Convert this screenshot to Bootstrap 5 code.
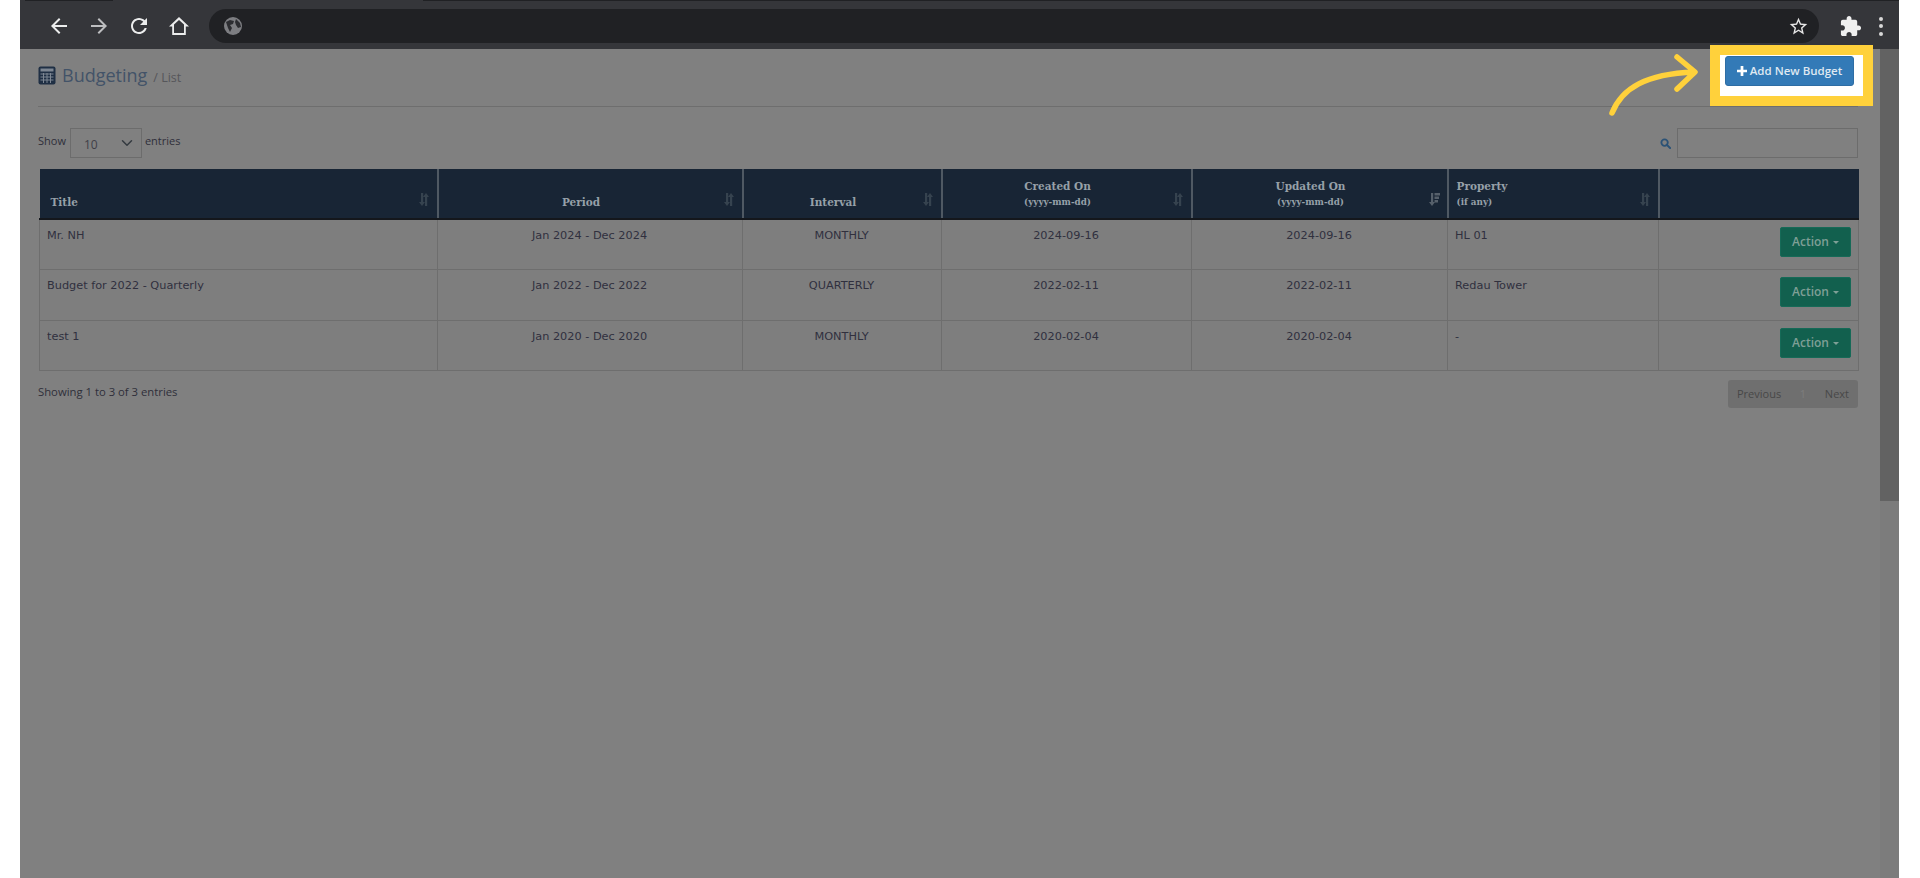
<!DOCTYPE html>
<html lang="en"><head><meta charset="utf-8"><title>Budgeting</title>
<link rel="stylesheet" href="https://cdn.jsdelivr.net/npm/bootstrap@5.3.0/dist/css/bootstrap.min.css">
<style>
html,body{height:100%;overflow:hidden}
body{background:#fff;font-family:"Open Sans","Noto Sans",sans-serif;font-size:11px;color:#30303e}
.frame{margin:0 20px 0 20px;height:878px;width:1879px;display:flex;flex-direction:column;position:relative;background:#808080}
.chrome-bar{height:49px;padding-top:3px;background:#35363a;display:flex;align-items:center;flex:none;position:relative}
.tabedge-a,.tabedge-b{position:absolute;top:0;height:1px;background:#202124}
.tabedge-a{left:5px;width:88px}.tabedge-b{left:403px;right:0}
.nav-ic{width:24px;height:24px;fill:#eceded;flex:none;display:block}
.nav-ic.dim{fill:#bdbec0}
.ic-slot{width:40px;display:flex;justify-content:center;flex:none}
.nav-group{padding-left:19px;display:flex}
.omni{margin-left:10px;width:1610px;height:34px;background:#202124;border-radius:17px;display:flex;align-items:center;justify-content:space-between;padding:0 10px 0 14px}
.globe{width:20px;height:20px;display:block}
.star-ic{width:21px;height:21px;fill:#e6e6e6;display:block}
.puzzle{width:23px;height:23px;fill:#f0f0f0;margin-left:20px;display:block}
.dots{display:flex;flex-direction:column;gap:3.5px;margin-left:17px}
.dots i{display:block;width:4px;height:4px;border-radius:50%;background:#d8d8d8}
.page-wrap{flex:1;display:flex;min-height:0}
.page-main{flex:1;padding:0 22px 0 18px;min-width:0}
.scroll-track{width:19px;background:#7c7c7c;flex:none}
.scroll-thumb{height:452px;background:#626262}
.head-row{height:43px;display:flex;align-items:flex-start;padding-top:14px;border-bottom:1px solid #6e6e6e;box-sizing:content-box}
.head-title{font-size:18px;line-height:24px;color:#435368;margin:0 0 0 6px;font-weight:400}
.head-sub{font-size:12.500px;color:#56565a;margin-left:6px}
.calc{width:18px;height:19px;display:block;margin-top:3px}
.tools-row{height:31px;margin-top:21px;display:flex;align-items:flex-start;justify-content:space-between}
.len-label{display:flex;align-items:flex-start;color:#2f2f3a;font-size:11px;line-height:26px}
.len-select{width:72px;height:30px;margin:0 3px 0 4px;background-color:transparent;background-position:right 6px center;border:1px solid #6c6c6c;border-radius:0;font-size:12px;color:#3f3f48;padding:4px 20px 0 13px;font-family:inherit;box-shadow:none}
.search-wrap{display:flex;align-items:center;gap:6px}
.search-ic{width:11px;height:11px;display:block}
.search-box{width:181px;height:30px;background:transparent;border:1px solid #6c6c6c;border-radius:0}
.grid-table{margin:10px 0 0 1px;width:1819px;table-layout:fixed;border-collapse:collapse;--bs-table-bg:transparent;color:#30303e;font-family:"DejaVu Sans",sans-serif;font-size:11.300px}
.grid-table th,.grid-table td{border:1px solid #6e6e6e;padding:0}
.grid-table thead th{background:#182535;color:#96a0a8;height:50px;font-family:"DejaVu Serif",serif;font-size:10.500px;font-weight:700;vertical-align:bottom;border:0;border-left:2px solid #4f5963;border-bottom:2px solid #14171c;position:relative;line-height:16px;padding:0 26px 8px 8px;text-align:center}
.grid-table thead th:first-child{border-left:0;text-align:left;padding-left:11px}
.th-left{text-align:left!important}
.th-note{display:block;font-size:8.800px;line-height:16px}
.sort-ic{position:absolute;right:7px;bottom:12px;width:12px;height:13px;fill:#36434f}
.sort-ic.on{fill:#56606b}
.grid-table tbody tr{height:50.500px}
.grid-table tbody td{vertical-align:top;padding:8px 8px 0 7px;line-height:16px;background:#7e7e7e}
.act-btn{display:inline-flex;align-items:center;gap:4px;height:30px;width:71px;justify-content:center;background:#12604e;border:1px solid #166a57;color:#7f9f96;font-family:"Open Sans",sans-serif;font-size:12px;font-weight:600;padding:0;border-radius:2px}
.act-btn:after{content:"";border-top:3px solid #7f9f96;border-left:3px solid transparent;border-right:3px solid transparent;margin-top:1px}
.act-cell{text-align:right;padding:7px 7px 0 0!important}
.foot-row{display:flex;justify-content:space-between;align-items:flex-start;margin-top:9px;font-size:11.300px;color:#2f2f3a}
.info-txt{margin-top:4px;line-height:16px}
.pager{display:flex;justify-content:space-between;align-items:center;width:130px;height:28px;background:#6f6f6f;border-radius:3px;padding:0 9px;font-size:11px;color:#484848}
.pager b{font-weight:400;color:#7d7d7d}
.mark-box{position:absolute;left:1690px;top:45px;width:163px;height:61px;border:10px solid #ffd13b;background:#fff}
.add-btn{position:absolute;left:5px;top:1px;width:129px;height:30px;background:#337ab7;border:1px solid #2e6da4;border-radius:3px;color:#dfe8f1;font-size:11.500px;font-weight:600;padding:0;display:flex;align-items:center;justify-content:center;gap:3px;white-space:nowrap}
.plus{width:10px;height:10px;fill:#fff;display:block}
.mark-arrow{position:absolute;left:1588px;top:48px;width:92px;height:72px;fill:none;stroke:#ffd13b;stroke-width:5.500;stroke-linecap:round;stroke-linejoin:round}
</style></head>
<body>
<div class="frame">
  <div class="chrome-bar">
    <span class="tabedge-a"></span><span class="tabedge-b"></span>
    <div class="nav-group">
      <span class="ic-slot"><svg class="nav-ic" viewBox="0 0 24 24"><path d="M20 11H7.830l5.590-5.590L12 4l-8 8 8 8 1.410-1.410L7.830 13H20v-2z"/></svg></span>
      <span class="ic-slot"><svg class="nav-ic dim" viewBox="0 0 24 24"><path d="M4 11h12.170l-5.590-5.590L12 4l8 8-8 8-1.410-1.410L16.170 13H4v-2z"/></svg></span>
      <span class="ic-slot"><svg class="nav-ic" viewBox="0 0 24 24"><path d="M17.650 6.350C16.200 4.900 14.210 4 12 4c-4.420 0-7.990 3.580-7.990 8s3.570 8 7.990 8c3.730 0 6.840-2.550 7.730-6h-2.080c-.82 2.330-3.040 4-5.650 4-3.310 0-6-2.690-6-6s2.690-6 6-6c1.660 0 3.140.69 4.220 1.780L13 11h7V4l-2.350 2.350z"/></svg></span>
      <span class="ic-slot"><svg class="nav-ic" viewBox="0 0 24 24"><path d="M12 3 2 12.400h3.200V21h13.600v-8.600H22L12 3zm0 2.900 5 4.600V19H7v-8.500l5-4.600z" fill-rule="evenodd"/></svg></span>
    </div>
    <div class="omni">
      <svg class="globe" viewBox="0 0 20 20"><circle cx="10" cy="10" r="9" fill="#7d7e82"/><path d="M3 6l4-2 4 1-1 3-3 1 2 3-2 4-2-4zM13 3l4 4 1 4-3 1-2-3-1-3z" fill="#2c2d31"/></svg>
      <svg class="star-ic" viewBox="0 0 24 24"><path d="M22 9.240l-7.190-.62L12 2 9.190 8.630 2 9.240l5.460 4.730L5.820 21 12 17.270 18.180 21l-1.630-7.030L22 9.240zM12 15.400l-3.760 2.270 1-4.280-3.320-2.880 4.380-.38L12 6.100l1.710 4.040 4.380.38-3.320 2.880 1 4.280L12 15.400z"/></svg>
    </div>
    <svg class="puzzle" viewBox="0 0 24 24"><path d="M20.500 11H19V7c0-1.100-.9-2-2-2h-4V3.500C13 2.120 11.880 1 10.500 1S8 2.120 8 3.500V5H4c-1.100 0-1.990.9-1.990 2v3.800H3.500c1.490 0 2.700 1.210 2.700 2.700s-1.210 2.700-2.700 2.700H2V20c0 1.100.9 2 2 2h3.800v-1.500c0-1.490 1.210-2.700 2.700-2.700 1.490 0 2.700 1.210 2.700 2.700V22H17c1.100 0 2-.9 2-2v-4h1.500c1.380 0 2.500-1.120 2.500-2.500S21.880 11 20.500 11z"/></svg>
    <span class="dots"><i></i><i></i><i></i></span>
  </div>
  <div class="page-wrap">
    <div class="page-main">
      <div class="head-row">
        <svg class="calc" viewBox="0 0 18 19"><rect x=".5" y=".5" width="17" height="18" rx="2" fill="#1f2f44"/><rect x="2.500" y="2.500" width="13" height="3" fill="#7d8692"/><path d="M2.500 8h13M2.500 11h13M2.500 14h13M5.500 7v10M9 7v10M12.500 7v10" stroke="#7d8692" stroke-width="1"/></svg>
        <h1 class="head-title">Budgeting<span class="head-sub">/ List</span></h1>
      </div>
      <div class="tools-row">
        <label class="len-label">Show<select class="form-select len-select"><option>10</option></select>entries</label>
        <div class="search-wrap">
          <svg class="search-ic" viewBox="0 0 12 12"><circle cx="5" cy="5" r="3.500" fill="none" stroke="#2b5276" stroke-width="2"/><path d="M7.500 7.500 11 11" stroke="#2b5276" stroke-width="2.200" stroke-linecap="round"/></svg>
          <input class="form-control search-box" type="search" aria-label="Search">
        </div>
      </div>
      <table class="table grid-table">
        <colgroup><col style="width:398px"><col style="width:305px"><col style="width:199px"><col style="width:250px"><col style="width:256px"><col style="width:211px"><col style="width:200px"></colgroup>
        <thead><tr>
          <th>Title<svg class="sort-ic" viewBox="0 0 12 13"><path d="M3 0h2.200v9H7l-3 4-3-4h2zM8 0l3 4H9.200v9H7V4H5z"/></svg></th>
          <th>Period<svg class="sort-ic" viewBox="0 0 12 13"><path d="M3 0h2.200v9H7l-3 4-3-4h2zM8 0l3 4H9.200v9H7V4H5z"/></svg></th>
          <th>Interval<svg class="sort-ic" viewBox="0 0 12 13"><path d="M3 0h2.200v9H7l-3 4-3-4h2zM8 0l3 4H9.200v9H7V4H5z"/></svg></th>
          <th>Created On<span class="th-note">(yyyy-mm-dd)</span><svg class="sort-ic" viewBox="0 0 12 13"><path d="M3 0h2.200v9H7l-3 4-3-4h2zM8 0l3 4H9.200v9H7V4H5z"/></svg></th>
          <th>Updated On<span class="th-note">(yyyy-mm-dd)</span><svg class="sort-ic on" viewBox="0 0 12 13"><path d="M3 0h2.200v9H7l-3 4-3-4h2zM6.500 0H12v2.500H6.500zM6.500 3.500h4.500V6H6.500zM6.500 7H10v2.500H6.500z"/></svg></th>
          <th class="th-left">Property<span class="th-note">(if any)</span><svg class="sort-ic" viewBox="0 0 12 13"><path d="M3 0h2.200v9H7l-3 4-3-4h2zM8 0l3 4H9.200v9H7V4H5z"/></svg></th>
          <th></th>
        </tr></thead>
        <tbody>
          <tr><td>Mr. NH</td><td class="text-center">Jan 2024 - Dec 2024</td><td class="text-center">MONTHLY</td><td class="text-center">2024-09-16</td><td class="text-center">2024-09-16</td><td>HL 01</td><td class="act-cell"><button class="btn act-btn" type="button">Action</button></td></tr>
          <tr><td>Budget for 2022 - Quarterly</td><td class="text-center">Jan 2022 - Dec 2022</td><td class="text-center">QUARTERLY</td><td class="text-center">2022-02-11</td><td class="text-center">2022-02-11</td><td>Redau Tower</td><td class="act-cell"><button class="btn act-btn" type="button">Action</button></td></tr>
          <tr><td>test 1</td><td class="text-center">Jan 2020 - Dec 2020</td><td class="text-center">MONTHLY</td><td class="text-center">2020-02-04</td><td class="text-center">2020-02-04</td><td>-</td><td class="act-cell"><button class="btn act-btn" type="button">Action</button></td></tr>
        </tbody>
      </table>
      <div class="foot-row">
        <div class="info-txt">Showing 1 to 3 of 3 entries</div>
        <div class="pager"><span>Previous</span><b>1</b><span>Next</span></div>
      </div>
    </div>
    <div class="scroll-track"><div class="scroll-thumb"></div></div>
  </div>
  <svg class="mark-arrow" viewBox="0 0 92 72"><path d="M4 65C14 40 38 26 86 24M69 9 87 24 69 41"/></svg>
  <div class="mark-box"><button class="btn add-btn" type="button"><svg class="plus" viewBox="0 0 11 11"><path d="M4 0h3v4h4v3H7v4H4V7H0V4h4z"/></svg>Add New Budget</button></div>
</div>
<script src="https://cdn.jsdelivr.net/npm/bootstrap@5.3.0/dist/js/bootstrap.bundle.min.js"></script>
</body></html>
